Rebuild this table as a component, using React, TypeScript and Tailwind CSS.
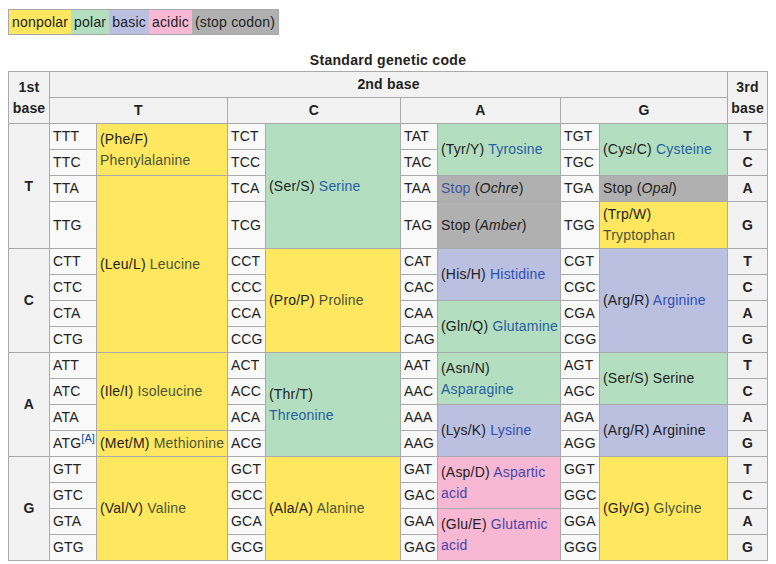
import React from "react";

type K = "y" | "g" | "b" | "p" | "s";

const BG: Record<K, string> = {
  y: "bg-[#ffe75f]",
  g: "bg-[#b3dec0]",
  b: "bg-[#bbbfe0]",
  p: "bg-[#f8b7d3]",
  s: "bg-[#b0b0b0]",
};
const LINK: Record<K, string> = {
  y: "text-[#4a5638]",
  g: "text-[#285fa0]",
  b: "text-[#3050b4]",
  p: "text-[#4646aa]",
  s: "text-[#3c55a0]",
};

const base = "border border-[#aaaaaa] px-[3px] py-[2px] align-middle whitespace-nowrap";
const codonCls = base + " bg-[#f9f9f9] text-left font-normal";
const thCls = base + " bg-[#f2f2f2] font-bold text-center";

function Codon({ c }: { c: string }) {
  return <td className={codonCls}>{c}</td>;
}

function Th({ t, rowSpan, colSpan }: { t: React.ReactNode; rowSpan?: number; colSpan?: number }) {
  return (
    <th className={thCls} rowSpan={rowSpan} colSpan={colSpan}>
      {t}
    </th>
  );
}

function AA({
  k,
  abbr,
  name,
  name2,
  rows,
  link = true,
  br = false,
}: {
  k: K;
  abbr: string;
  name: string;
  name2?: string;
  rows?: number;
  link?: boolean;
  br?: boolean;
}) {
  return (
    <td className={base + " " + BG[k]} rowSpan={rows}>
      {abbr}
      {br ? <br /> : " "}
      <span className={link ? LINK[k] : ""}>{name}</span>
      {name2 ? (
        <>
          <br />
          <span className={link ? LINK[k] : ""}>{name2}</span>
        </>
      ) : null}
    </td>
  );
}

function Stop({ label, link }: { label: string; link: boolean }) {
  return (
    <td className={base + " " + BG.s}>
      <span className={link ? LINK.s : ""}>Stop</span> (<i>{label}</i>)
    </td>
  );
}

export default function App() {
  return (
    <div
      className="min-h-[564px] bg-white pl-2 pt-[9px] text-[14px] leading-[21px] tracking-[0.2px] text-[#222222]"
      style={{ fontFamily: '"Liberation Sans", Arial, sans-serif' }}
    >
      <div className="inline-flex border border-[#a8a8a8] leading-[22px]">
        <div className="bg-[#ffe75f] px-[3px] py-px">nonpolar</div>
        <div className="bg-[#b3dec0] px-[3px] py-px">polar</div>
        <div className="bg-[#bbbfe0] px-[3px] py-px">basic</div>
        <div className="bg-[#f8b7d3] px-[3px] py-px">acidic</div>
        <div className="bg-[#b0b0b0] px-[3px] py-px">(stop codon)</div>
      </div>

      <table className="mt-[14px] w-[759px] table-fixed border-collapse">
        <caption className="font-bold leading-[22px] tracking-[0.3px]">Standard genetic code</caption>
        <colgroup>
          <col className="w-[41px]" />
          <col className="w-[47px]" />
          <col className="w-[131px]" />
          <col className="w-[38px]" />
          <col className="w-[135px]" />
          <col className="w-[37px]" />
          <col className="w-[123px]" />
          <col className="w-[39px]" />
          <col className="w-[128px]" />
          <col className="w-[40px]" />
        </colgroup>
        <tbody>
          <tr>
            <Th rowSpan={2} t={<>1st<br />base</>} />
            <Th colSpan={8} t="2nd base" />
            <Th rowSpan={2} t={<>3rd<br />base</>} />
          </tr>
          <tr>
            <Th colSpan={2} t="T" />
            <Th colSpan={2} t="C" />
            <Th colSpan={2} t="A" />
            <Th colSpan={2} t="G" />
          </tr>

          {/* T */}
          <tr>
            <Th rowSpan={4} t="T" />
            <Codon c="TTT" />
            <AA k="y" abbr="(Phe/F)" name="Phenylalanine" rows={2} br />
            <Codon c="TCT" />
            <AA k="g" abbr="(Ser/S)" name="Serine" rows={4} />
            <Codon c="TAT" />
            <AA k="g" abbr="(Tyr/Y)" name="Tyrosine" rows={2} />
            <Codon c="TGT" />
            <AA k="g" abbr="(Cys/C)" name="Cysteine" rows={2} />
            <Th t="T" />
          </tr>
          <tr>
            <Codon c="TTC" />
            <Codon c="TCC" />
            <Codon c="TAC" />
            <Codon c="TGC" />
            <Th t="C" />
          </tr>
          <tr>
            <Codon c="TTA" />
            <AA k="y" abbr="(Leu/L)" name="Leucine" rows={6} />
            <Codon c="TCA" />
            <Codon c="TAA" />
            <Stop label="Ochre" link />
            <Codon c="TGA" />
            <Stop label="Opal" link={false} />
            <Th t="A" />
          </tr>
          <tr>
            <Codon c="TTG" />
            <Codon c="TCG" />
            <Codon c="TAG" />
            <Stop label="Amber" link={false} />
            <Codon c="TGG" />
            <AA k="y" abbr="(Trp/W)" name="Tryptophan" br />
            <Th t="G" />
          </tr>

          {/* C */}
          <tr>
            <Th rowSpan={4} t="C" />
            <Codon c="CTT" />
            <Codon c="CCT" />
            <AA k="y" abbr="(Pro/P)" name="Proline" rows={4} />
            <Codon c="CAT" />
            <AA k="b" abbr="(His/H)" name="Histidine" rows={2} />
            <Codon c="CGT" />
            <AA k="b" abbr="(Arg/R)" name="Arginine" rows={4} />
            <Th t="T" />
          </tr>
          <tr>
            <Codon c="CTC" />
            <Codon c="CCC" />
            <Codon c="CAC" />
            <Codon c="CGC" />
            <Th t="C" />
          </tr>
          <tr>
            <Codon c="CTA" />
            <Codon c="CCA" />
            <Codon c="CAA" />
            <AA k="g" abbr="(Gln/Q)" name="Glutamine" rows={2} />
            <Codon c="CGA" />
            <Th t="A" />
          </tr>
          <tr>
            <Codon c="CTG" />
            <Codon c="CCG" />
            <Codon c="CAG" />
            <Codon c="CGG" />
            <Th t="G" />
          </tr>

          {/* A */}
          <tr>
            <Th rowSpan={4} t="A" />
            <Codon c="ATT" />
            <AA k="y" abbr="(Ile/I)" name="Isoleucine" rows={3} />
            <Codon c="ACT" />
            <AA k="g" abbr="(Thr/T)" name="Threonine" rows={4} br />
            <Codon c="AAT" />
            <AA k="g" abbr="(Asn/N)" name="Asparagine" rows={2} br />
            <Codon c="AGT" />
            <AA k="g" abbr="(Ser/S)" name="Serine" rows={2} link={false} />
            <Th t="T" />
          </tr>
          <tr>
            <Codon c="ATC" />
            <Codon c="ACC" />
            <Codon c="AAC" />
            <Codon c="AGC" />
            <Th t="C" />
          </tr>
          <tr>
            <Codon c="ATA" />
            <Codon c="ACA" />
            <Codon c="AAA" />
            <AA k="b" abbr="(Lys/K)" name="Lysine" rows={2} />
            <Codon c="AGA" />
            <AA k="b" abbr="(Arg/R)" name="Arginine" rows={2} link={false} />
            <Th t="A" />
          </tr>
          <tr>
            <td className={codonCls}>
              ATG
              <sup className="relative -top-[6px] align-baseline text-[11px] tracking-normal text-[#0645ad]">[A]</sup>
            </td>
            <AA k="y" abbr="(Met/M)" name="Methionine" />
            <Codon c="ACG" />
            <Codon c="AAG" />
            <Codon c="AGG" />
            <Th t="G" />
          </tr>

          {/* G */}
          <tr>
            <Th rowSpan={4} t="G" />
            <Codon c="GTT" />
            <AA k="y" abbr="(Val/V)" name="Valine" rows={4} />
            <Codon c="GCT" />
            <AA k="y" abbr="(Ala/A)" name="Alanine" rows={4} />
            <Codon c="GAT" />
            <AA k="p" abbr="(Asp/D)" name="Aspartic" name2="acid" rows={2} />
            <Codon c="GGT" />
            <AA k="y" abbr="(Gly/G)" name="Glycine" rows={4} />
            <Th t="T" />
          </tr>
          <tr>
            <Codon c="GTC" />
            <Codon c="GCC" />
            <Codon c="GAC" />
            <Codon c="GGC" />
            <Th t="C" />
          </tr>
          <tr>
            <Codon c="GTA" />
            <Codon c="GCA" />
            <Codon c="GAA" />
            <AA k="p" abbr="(Glu/E)" name="Glutamic" name2="acid" rows={2} />
            <Codon c="GGA" />
            <Th t="A" />
          </tr>
          <tr>
            <Codon c="GTG" />
            <Codon c="GCG" />
            <Codon c="GAG" />
            <Codon c="GGG" />
            <Th t="G" />
          </tr>
        </tbody>
      </table>
    </div>
  );
}
